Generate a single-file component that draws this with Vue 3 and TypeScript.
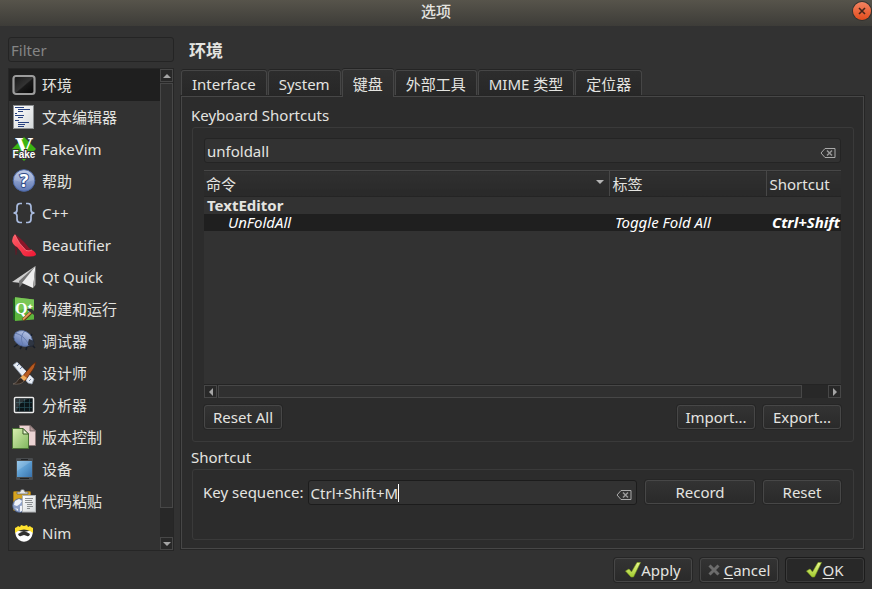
<script setup lang="ts">
import { ref } from 'vue'

interface Category {
  id: string
  label: string
}

const categories: Category[] = [
  { id: 'environment', label: '环境' },
  { id: 'editor', label: '文本编辑器' },
  { id: 'fakevim', label: 'FakeVim' },
  { id: 'help', label: '帮助' },
  { id: 'cpp', label: 'C++' },
  { id: 'beautifier', label: 'Beautifier' },
  { id: 'quick', label: 'Qt Quick' },
  { id: 'build', label: '构建和运行' },
  { id: 'debugger', label: '调试器' },
  { id: 'designer', label: '设计师' },
  { id: 'analyzer', label: '分析器' },
  { id: 'vcs', label: '版本控制' },
  { id: 'devices', label: '设备' },
  { id: 'paste', label: '代码粘贴' },
  { id: 'nim', label: 'Nim' },
]
const tabs: string[] = ['Interface', 'System', '键盘', '外部工具', 'MIME 类型', '定位器']

const current = ref('environment')
const activeTab = ref('键盘')
const filter = ref('')
const search = ref('unfoldall')
const keySequence = ref('Ctrl+Shift+M')
</script>

<template>
  <div class="dialog">
    <svg class="defs" aria-hidden="true">
      <defs>
        <linearGradient id="g-screen" x1="0" y1="0" x2="1" y2="1">
          <stop offset="0" stop-color="#161616" /><stop offset=".5" stop-color="#333" /><stop offset=".55" stop-color="#181818" /><stop offset="1" stop-color="#050505" />
        </linearGradient>
        <linearGradient id="g-blue" x1="0" y1="0" x2="0" y2="1">
          <stop offset="0" stop-color="#b4c2e2" /><stop offset="1" stop-color="#5f78b4" />
        </linearGradient>
        <linearGradient id="g-page" x1="0" y1="0" x2="1" y2="1">
          <stop offset="0" stop-color="#fff" /><stop offset="1" stop-color="#d4d8da" />
        </linearGradient>
        <linearGradient id="g-red" x1="0" y1="0" x2="1" y2="1">
          <stop offset="0" stop-color="#ff6068" /><stop offset="1" stop-color="#ee1734" />
        </linearGradient>
        <linearGradient id="g-device" x1="0" y1="0" x2="1" y2="1">
          <stop offset="0" stop-color="#85bfe8" /><stop offset=".5" stop-color="#5a9bd0" /><stop offset="1" stop-color="#3973ad" />
        </linearGradient>
        <linearGradient id="g-green" x1="0" y1="0" x2="1" y2="1">
          <stop offset="0" stop-color="#d9efb0" /><stop offset="1" stop-color="#80b75e" />
        </linearGradient>
        <linearGradient id="g-check" x1="0" y1="0" x2="0" y2="1">
          <stop offset="0" stop-color="#e9f78c" /><stop offset="1" stop-color="#a2cc30" />
        </linearGradient>
      </defs>
    </svg>

    <header class="titlebar">
      <span class="window-title">选项</span>
      <button class="close" type="button" aria-label="Close">
        <svg width="18" height="18" viewBox="0 0 18 18">
          <path d="M6 6l6 6M12 6l-6 6" stroke="#43251a" stroke-width="1.6" />
        </svg>
      </button>
    </header>

    <div class="body">
      <aside class="sidebar">
        <input v-model="filter" class="field" type="text" placeholder="Filter" aria-label="Filter" />
        <div class="list-frame">
          <nav class="categories">
            <button
              v-for="c in categories"
              :key="c.id"
              type="button"
              class="category"
              :class="{ selected: c.id === current }"
              @click="current = c.id"
            >
              <svg width="24" height="24" viewBox="0 0 24 24" aria-hidden="true">
                <g v-if="c.id === 'environment'">
                  <rect x="1.5" y="3" width="21" height="18" rx="2.5" fill="url(#g-screen)" stroke="#9c9c9c" stroke-width="2.2" />
                </g>
                <g v-else-if="c.id === 'editor'">
                  <rect x="1.5" y=".5" width="20" height="23" fill="url(#g-page)" stroke="#8c8f91" />
                  <path d="M3 2.5h9M6 4.5h12M6 6.5h5M3 8.5h2M3 10.5h9M6 12.5h5M3 15.5h4M6 17.5h11M6 19.5h7M6 21.5h6" stroke="#27417f" />
                </g>
                <g v-else-if="c.id === 'fakevim'">
                  <path d="M12 0l12 12-12 12L0 12z" fill="#3bb512" />
                  <text x="12" y="17" text-anchor="middle" class="glyph-v">V</text>
                  <text x="12" y="21" text-anchor="middle" class="glyph-fake">Fake</text>
                </g>
                <g v-else-if="c.id === 'help'">
                  <circle cx="12" cy="11.5" r="10.8" fill="url(#g-blue)" stroke="#4b67a5" />
                  <path d="M2 11a10 10 0 0 1 20 0q-10 4-20 0z" fill="#fff" opacity=".15" />
                  <text x="12" y="18" text-anchor="middle" class="glyph-q">?</text>
                </g>
                <g v-else-if="c.id === 'cpp'" fill="none" stroke="#a9bbdf" stroke-width="1.7">
                  <path d="M10 2.5H8Q5 2.5 5 6v3q0 3-3.500 3Q5 12 5 15v3q0 3.500 3 3.500h2" />
                  <path d="M14 2.5h2q3 0 3 3.500v3q0 3 3.500 3Q19 12 19 15v3q0 3.500-3 3.500h-2" />
                </g>
                <g v-else-if="c.id === 'beautifier'">
                  <path d="M2 10l3.500 5-1 7H3.500L3 15z" fill="#5c1c28" />
                  <path d="M3 1Q13 9 17 15l3 2-5 2Q6 11 3 1z" fill="#8a1528" />
                  <path d="M3 1Q0 4 0 8q1 4 5 6 3 3 6 8 2 2 7 1.500 4 0 6-1.500 0-3-4-5-3 1.500-6 0Q6 10 3 1z" fill="url(#g-red)" />
                  <path d="M3 2Q7 11 14 17.500q3 1 6-.5" fill="none" stroke="#ff9298" stroke-width=".6" />
                </g>
                <g v-else-if="c.id === 'quick'">
                  <path d="M23.5 1L0 17l9 1z" fill="#cfcfcf" />
                  <path d="M23.5 1L7 16l.5 6.500 3-4z" fill="#747474" />
                  <path d="M23.5 1L10 18l11 5z" fill="#eee" />
                  <path d="M23.5 1L21 23l2.500-3z" fill="#a5a5a5" />
                </g>
                <g v-else-if="c.id === 'build'">
                  <path d="M1 2l3-2v24l-3-1.500z" fill="#1f641e" />
                  <path d="M3 .3L22 2.500v20L3 24z" fill="#5db53d" />
                  <path d="M3 .3L22 2.500v9Q12 11 3 14z" fill="#86cf61" opacity=".7" />
                  <text x="12" y="17" text-anchor="middle" class="glyph-qt">Qt</text>
                  <path d="M11 23l9-8.500" stroke="#603816" stroke-width="3.400" />
                  <path d="M11 22.500l8.500-8" stroke="#e09a58" stroke-width="2" />
                  <path d="M15 12.500q3-2 6 .5l3 3.500-2 1.500-4-3z" fill="#343434" />
                </g>
                <g v-else-if="c.id === 'debugger'">
                  <path d="M1 9l4 2M2 18l4-3M8 20l2-3M15 17l-1 4M19 15l4 4M18 8l2-3" stroke="#171d28" stroke-width="1.5" />
                  <circle cx="18" cy="13.5" r="4.5" fill="#252b37" />
                  <ellipse cx="11" cy="9.5" rx="9.500" ry="7.5" transform="rotate(25 11 9.5)" fill="url(#g-blue)" stroke="#526896" stroke-width=".8" />
                  <path d="M3 4q9 2 14 12M13 2q-6 5-2 14" stroke="#657caf" fill="none" />
                  <path d="M17 10q5 1 5 5-2 3-6 1 0-3 1-6z" fill="#2f3643" />
                </g>
                <g v-else-if="c.id === 'designer'">
                  <path d="M1 4l4-3 17 17-2 5-4-1z" fill="#e8edf4" stroke="#8f9cae" stroke-width=".8" />
                  <path d="M5 5l2-2M8 8l2-2M14 17l2-2M17 20l2-2" stroke="#7182a2" />
                  <path d="M9 17l11-13 4-3-2 6-9 13z" fill="#b85b20" stroke="#552710" stroke-width=".8" />
                  <path d="M8 17l3-3 4 3-3 3z" fill="#efac5a" />
                  <path d="M9 17l3 3q-3 4-11 3 4-1 5-4 1-2 3-2z" fill="#342820" stroke="#918174" stroke-width=".5" />
                </g>
                <g v-else-if="c.id === 'analyzer'">
                  <rect x="2.5" y="4.5" width="19" height="15" rx="1" fill="#0b1519" stroke="#ececec" stroke-width="1.5" />
                  <path d="M7.5 6v12M12.5 6v12M17.5 6v12M4 9.500h16M4 14.500h16" stroke="#28505a" stroke-width=".7" />
                  <path d="M4 6h12Q7 9 5 18H4z" fill="#fff" opacity=".15" />
                </g>
                <g v-else-if="c.id === 'vcs'">
                  <path d="M7.5.5H18L23.5 6v14.500h-16z" fill="#ead2d2" stroke="#8b7777" />
                  <path d="M18 .5V6h5.500z" fill="#b39b9b" stroke="#735f5f" stroke-width=".8" />
                  <path d="M.5 3.500H11L16.500 9v14.500H.5z" fill="url(#g-green)" stroke="#4b7435" />
                  <path d="M11 3.500V9h5.500z" fill="#e7f5d1" stroke="#365525" />
                </g>
                <g v-else-if="c.id === 'devices'">
                  <rect x="4" y="1" width="17" height="22" rx="1" fill="#484b4e" />
                  <rect x="5" y="4" width="15" height="16" fill="url(#g-device)" />
                  <path d="M5 4h15L5 14z" fill="#fff" opacity=".15" />
                  <path d="M9 2.500h7M8 21.500h9" stroke="#202224" />
                </g>
                <g v-else-if="c.id === 'paste'">
                  <rect x="1.5" y="2.5" width="17" height="19" rx="1" fill="#d5a31f" stroke="#a57916" />
                  <path d="M5 5V3h3q0-2.500 2.500-2.500T13 3h3v2z" fill="#e6e7e8" stroke="#64676a" stroke-width=".8" />
                  <circle cx="7.5" cy="16.5" r="6.8" fill="#8ea1c8" stroke="#536b99" stroke-width=".8" />
                  <path d="M3 12l4-2 3 2-2 3-3 2-3-1zM8 17l5-1-2 5-3 2zM3 19l3 1v2z" fill="#f0f3fa" />
                  <rect x="10.5" y="6.5" width="13" height="16.5" fill="url(#g-page)" stroke="#b1b4b7" />
                  <path d="M13 9.500h8M13 11.500h7M13 13.500h8M15 15.500h5M15 17.500h6M15 19.500h3" stroke="#73777a" stroke-width=".8" />
                </g>
                <g v-else>
                  <path d="M3 9q0 7 4 10 5 3.500 10 0 4-3 4-10l-9 2z" fill="#fff" />
                  <path d="M3 12V7l2-1 1-1 2 1 1-2 3 1 3-1 1 2 2-1 1 1 2 1v5l-3-2q-6-3-12 0z" fill="#ffe22e" />
                  <path d="M6 13q6-5 12 0-1 3-3 2l-3-1-3 1q-2 1-3-2z" fill="#303030" />
                </g>
              </svg>
              <span>{{ c.label }}</span>
            </button>
          </nav>
          <div class="scroll vertical">
            <button type="button" class="arrow" aria-label="Scroll up"><svg width="8" height="4"><path d="M0 4l4-4 4 4z" fill="#a5a5a5" /></svg></button>
            <span class="thumb"></span><span class="rest"></span>
            <button type="button" class="arrow" aria-label="Scroll down"><svg width="8" height="4"><path d="M0 0l4 4 4-4z" fill="#a5a5a5" /></svg></button>
          </div>
        </div>
      </aside>

      <main class="content">
        <h1>环境</h1>
        <div class="tabs" role="tablist">
          <button
            v-for="t in tabs"
            :key="t"
            type="button"
            role="tab"
            class="tab"
            :class="{ active: t === activeTab }"
            :aria-selected="t === activeTab"
            @click="activeTab = t"
          >{{ t }}</button>
        </div>
        <div class="panel">
          <h2>Keyboard Shortcuts</h2>
          <section class="group shortcuts">
            <div class="field clearable">
              <input v-model="search" class="grow" type="text" aria-label="Search commands" />
              <button type="button" class="clear" aria-label="Clear search" @click="search = ''">
                <svg width="16" height="12" viewBox="0 0 16 12"><path d="M1 6l4-4.500h10v9H5z" fill="none" stroke="#aaa" /><path d="M7 3.500l5 5M12 3.500l-5 5" stroke="#999" stroke-width="1.5" /></svg>
              </button>
            </div>
            <div class="table-frame">
              <table>
                <colgroup><col class="col-command" /><col class="col-label" /><col class="col-shortcut" /></colgroup>
                <thead>
                  <tr>
                    <th><span class="sorted">命令 <svg width="8" height="4"><path d="M0 0l4 4 4-4z" fill="#b5b5b5" /></svg></span></th>
                    <th>标签</th>
                    <th>Shortcut</th>
                  </tr>
                </thead>
                <tbody>
                  <tr class="parent"><td colspan="3">TextEditor</td></tr>
                  <tr class="command"><td>UnFoldAll</td><td>Toggle Fold All</td><td>Ctrl+Shift</td></tr>
                </tbody>
              </table>
              <div class="scroll horizontal">
                <button type="button" class="arrow" aria-label="Scroll left"><svg width="4" height="8"><path d="M4 0L0 4l4 4z" fill="#a5a5a5" /></svg></button>
                <span class="thumb"></span><span class="rest"></span>
                <button type="button" class="arrow" aria-label="Scroll right"><svg width="4" height="8"><path d="M0 0l4 4-4 4z" fill="#a5a5a5" /></svg></button>
              </div>
            </div>
            <div class="actions">
              <button type="button" class="btn">Reset All</button>
              <span class="grow"></span>
              <button type="button" class="btn">Import...</button>
              <button type="button" class="btn">Export...</button>
            </div>
          </section>
          <h2>Shortcut</h2>
          <section class="group sequence">
            <div class="labelled">
              <label for="key-sequence">Key sequence:</label>
              <div class="field clearable focused">
                <input id="key-sequence" v-model="keySequence" class="fit" type="text" />
                <span class="caret"></span>
                <span class="grow"></span>
                <button type="button" class="clear" aria-label="Clear key sequence" @click="keySequence = ''">
                  <svg width="16" height="12" viewBox="0 0 16 12"><path d="M1 6l4-4.500h10v9H5z" fill="none" stroke="#aaa" /><path d="M7 3.500l5 5M12 3.500l-5 5" stroke="#999" stroke-width="1.5" /></svg>
                </button>
              </div>
            </div>
            <button type="button" class="btn record">Record</button>
            <button type="button" class="btn">Reset</button>
          </section>
        </div>
      </main>
    </div>

    <footer class="footer">
      <button type="button" class="btn">
        <svg width="16" height="16" viewBox="0 0 16 16"><path d="M.5 9L4 7l2.500 3L12 .5h3.500L8.500 15H6z" fill="url(#g-check)" stroke="#7fa21e" stroke-width=".6" /></svg>
        <span>Apply</span>
      </button>
      <button type="button" class="btn cancel">
        <svg width="12" height="12" viewBox="0 0 12 12"><path d="M1.500 1.500l9 9M10.500 1.500l-9 9" stroke="#6c6c6c" stroke-width="3" /></svg>
        <span><u>C</u>ancel</span>
      </button>
      <button type="button" class="btn default">
        <svg width="16" height="16" viewBox="0 0 16 16"><path d="M.5 9L4 7l2.500 3L12 .5h3.500L8.500 15H6z" fill="url(#g-check)" stroke="#7fa21e" stroke-width=".6" /></svg>
        <span><u>O</u>K</span>
      </button>
    </footer>
  </div>
</template>

<style>
body {
  margin: 0;
  background: #323232;
}
</style>

<style scoped>
* {
  box-sizing: border-box;
}
.dialog {
  display: flex;
  flex-direction: column;
  min-height: 100vh;
  background: #323232;
  color: #e4e4e0;
  font: 15px/20px "Noto Sans", "Noto Sans CJK SC", sans-serif;
}
button,
input {
  margin: 0;
  padding: 0;
  border: 0;
  background: none;
  color: inherit;
  font: inherit;
  outline: none;
}
svg {
  display: block;
  flex: none;
}
.defs {
  position: absolute;
  width: 0;
  height: 0;
}
.titlebar {
  display: grid;
  grid-template-columns: 1fr auto 1fr;
  align-items: center;
  height: 26px;
  padding-bottom: 4px;
  background: linear-gradient(#57544b, #3d3c38);
}
.window-title {
  grid-column: 2;
  font-weight: 500;
}
.close {
  justify-self: end;
  width: 18px;
  height: 18px;
  margin-right: 1px;
  border-radius: 50%;
  background: linear-gradient(#f38361, #e24c1c);
  box-shadow: 0 0 0 1px #34322e;
}
.body {
  display: grid;
  grid-template-columns: 166px minmax(0, 1fr);
  gap: 7px;
  flex: 1;
  padding: 11px 8px 0;
}
.sidebar {
  display: flex;
  flex-direction: column;
  gap: 6px;
}
.field {
  height: 25px;
  padding: 0 2px;
  border: 1px solid #242424;
  border-radius: 3px;
  background: #323232;
}
.field::placeholder {
  color: #858585;
}
.list-frame {
  display: flex;
  flex: 1;
  border: 1px solid #262626;
}
.categories {
  flex: 1;
}
.category {
  display: flex;
  align-items: center;
  gap: 6px;
  width: 100%;
  height: 32px;
  padding-left: 3px;
  text-align: left;
  white-space: nowrap;
}
.category.selected {
  background: #1f1f1f;
}
.category svg {
  overflow: visible;
}
.glyph-v {
  font: bold 22px "DejaVu Serif", serif;
  fill: #fff;
}
.glyph-fake {
  font: bold 10px "Liberation Sans", sans-serif;
  fill: #fff;
  stroke: #333;
  stroke-width: 2px;
  paint-order: stroke;
}
.glyph-q {
  font: bold 18px "Noto Sans", sans-serif;
  fill: #fff;
  stroke: #314c8a;
  stroke-width: 2px;
  paint-order: stroke;
}
.glyph-qt {
  font: bold 16px "Liberation Serif", serif;
  fill: #fff;
}
.scroll {
  display: flex;
  background: #282828;
}
.scroll.vertical {
  flex-direction: column;
  width: 13px;
}
.scroll.horizontal {
  height: 14px;
  border-top: 1px solid #242424;
}
.arrow {
  display: flex;
  align-items: center;
  justify-content: center;
  flex: 0 0 13px;
  border: 1px solid #474747;
}
.thumb {
  flex: 425;
  margin-top: 1px;
  border: 1px solid #474747;
  background: #303030;
}
.rest {
  flex: 29;
}
.horizontal .thumb {
  flex: 584;
  margin: 0 0 0 1px;
}
.horizontal .rest {
  flex: 26;
}
.content {
  display: flex;
  flex-direction: column;
  padding-bottom: 2px;
}
h1 {
  margin: 0;
  padding: 2px 8px 6px;
  font-size: 17px;
  line-height: 24px;
}
.tabs {
  display: flex;
  align-items: flex-end;
  gap: 1px;
  height: 28px;
  margin-bottom: -1px;
}
.tab {
  height: 26px;
  margin-bottom: 1px;
  padding: 0 10px;
  border: 1px solid #464646;
  border-bottom: 0;
  border-radius: 3px 3px 0 0;
  background: linear-gradient(#2d2d2d, #272727);
  box-shadow: 0 -1px #242424;
  white-space: nowrap;
}
.tab.active {
  height: 28px;
  margin-bottom: 0;
  background: linear-gradient(#323232, #2c2c2c);
}
.panel {
  display: flex;
  flex-direction: column;
  flex: 1;
  padding: 8px 9px;
  border: 1px solid #474747;
  background: #2c2c2c;
  box-shadow: 0 0 0 1px #262626;
}
.active {
  z-index: 1;
}
h2 {
  margin: 0;
  font-size: 15px;
  font-weight: 400;
  line-height: 20px;
}
.group {
  margin-top: 2px;
  margin-left: 1px;
  border: 1px solid #3a3a3a;
  border-radius: 3px;
}
.shortcuts {
  display: flex;
  flex-direction: column;
  flex: 1;
  gap: 7px;
  margin-bottom: 5px;
  padding: 10px 12px 12px 11px;
}
.clearable {
  display: flex;
  align-items: center;
  padding-right: 4px;
}
.clear {
  margin-top: 4px;
}
.grow {
  flex: 1;
  min-width: 0;
}
.fit {
  field-sizing: content;
}
.caret {
  width: 1px;
  height: 18px;
  background: #fff;
}
.table-frame {
  display: flex;
  flex-direction: column;
  justify-content: space-between;
  flex: 1;
  overflow: hidden;
  background: #323232;
}
table {
  width: 100%;
  border-collapse: collapse;
  table-layout: fixed;
}
.col-label {
  width: 157px;
}
.col-shortcut {
  width: 75px;
}
th {
  height: 26px;
  padding: 0 5px 0 2px;
  border-top: 1px solid #474747;
  border-bottom: 1px solid #242424;
  background: linear-gradient(#303030, #292929);
  font-weight: 400;
  text-align: left;
}
th + th {
  padding-left: 3px;
  border-left: 1px solid #474747;
}
.sorted {
  display: flex;
  align-items: center;
  justify-content: space-between;
}
.sorted svg {
  margin-bottom: 4px;
}
td {
  height: 17px;
  padding: 0 3px;
  line-height: 17px;
  white-space: nowrap;
}
.parent {
  font-weight: 700;
}
.command {
  background: #1f1f1f;
  color: #fff;
  font-style: italic;
}
.command td {
  padding-left: 6px;
  padding-right: 0;
}
.command td:first-child {
  padding-left: 24px;
}
.command td:last-child {
  font-weight: 700;
}
.btn {
  display: flex;
  align-items: center;
  justify-content: center;
  min-width: 78px;
  height: 24px;
  border: 1px solid #474747;
  border-radius: 3px;
  background: linear-gradient(#333, #2a2a2a);
  box-shadow: 0 0 0 1px #262626;
}
.actions {
  display: flex;
  gap: 8px;
}
.sequence {
  display: flex;
  gap: 8px;
  height: 71px;
  padding: 10px 12px 10px 10px;
}
.labelled {
  display: flex;
  flex: 1;
  gap: 4px;
}
.labelled label {
  line-height: 25px;
}
.labelled .field {
  flex: 1;
}
.focused {
  border-color: #1c1c1c;
}
.record {
  width: 110px;
}
.footer {
  display: flex;
  justify-content: flex-end;
  gap: 8px;
  padding: 7px 8px;
}
.cancel {
  gap: 4px;
}
.default {
  border-color: #3c3c3c;
  background: #282828;
  box-shadow: 0 0 0 1px #1c1c1c;
}
u {
  text-underline-offset: 2px;
}
</style>
